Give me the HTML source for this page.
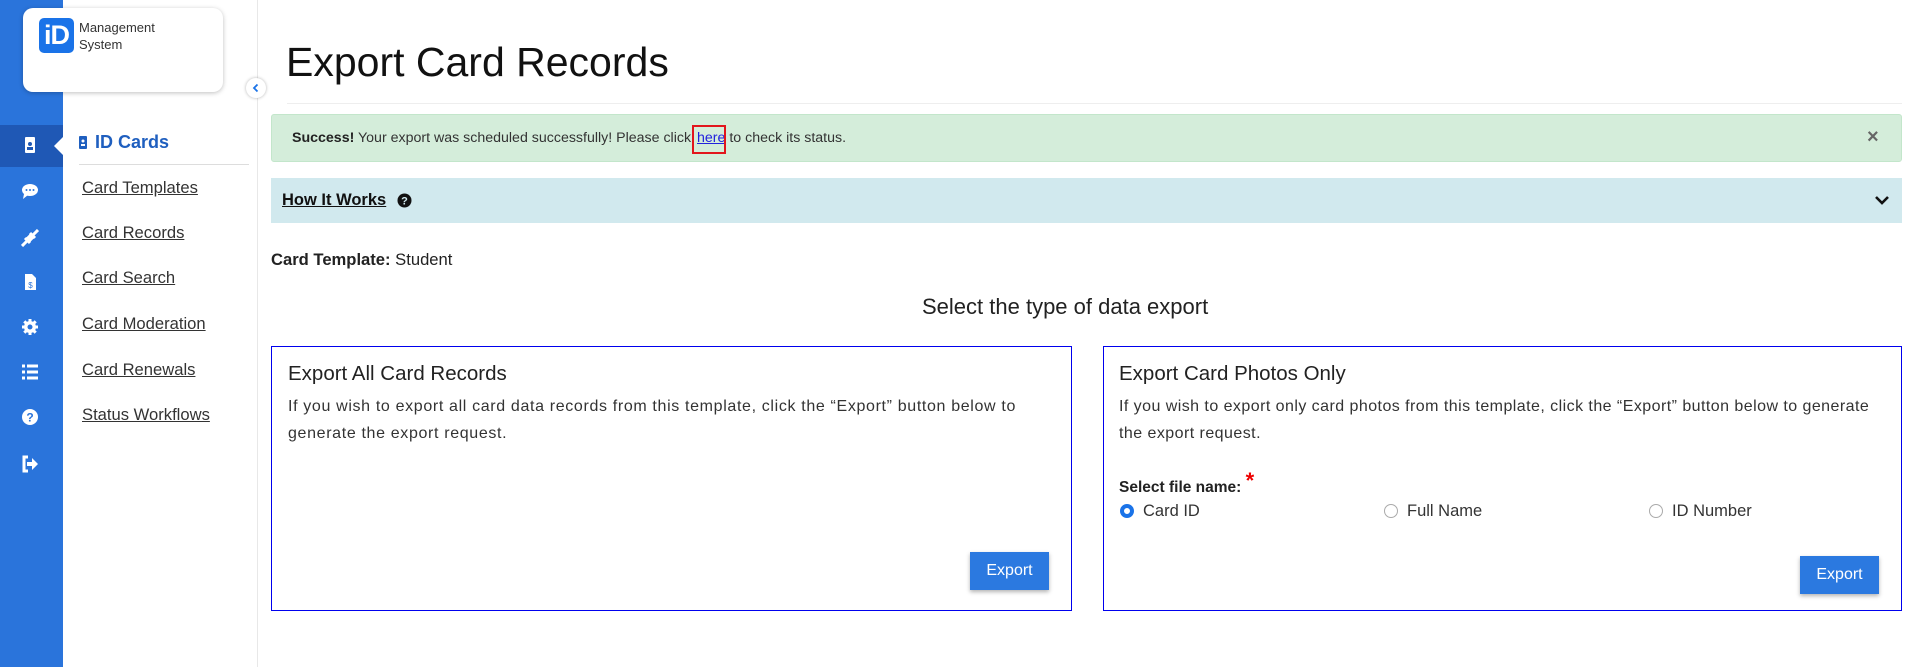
<!DOCTYPE html>
<html><head><meta charset="utf-8"><style>
*{margin:0;padding:0;box-sizing:border-box}
body{width:1914px;height:667px;overflow:hidden;background:#fff;font-family:"Liberation Sans",sans-serif;color:#212529;position:relative}
.abs{position:absolute}
.side{left:0;top:0;width:63px;height:667px;background:#2a74db}
.act{left:0;top:125px;width:63px;height:42px;background:#1f58b5}
.tri{left:54px;top:137px;width:0;height:0;border-top:9px solid transparent;border-bottom:9px solid transparent;border-right:9px solid #fff}
.ico{left:21px;width:18px;height:18px}
.logo{left:23px;top:8px;width:200px;height:84px;background:#fff;border-radius:10px;box-shadow:0 1px 5px rgba(0,0,0,.25)}
.vline{left:257px;top:0;width:1px;height:667px;background:#e8e8e8}
.nav{left:82px;font-size:16.6px;color:#333;text-decoration:underline;line-height:20px}
.card{border:1px solid #0000ee;background:#fff}
.btn{background:#2b79e0;color:#fff;font-size:16px;text-align:center;line-height:38px;width:79px;height:38px;box-shadow:0 2px 4px rgba(0,0,0,.3)}
.h5{font-size:20.5px;color:#222}
.p{font-size:16px;line-height:27px;color:#333;white-space:nowrap;letter-spacing:0.65px}
.radio{width:14px;height:14px;border-radius:50%;border:1px solid #aaa}
</style></head><body>
<div class="abs side"></div>
<div class="abs act"></div>
<div class="abs tri"></div>
<svg class="abs ico" style="top:136px" viewBox="0 0 18 18"><rect x="4" y="1" width="10" height="16" rx="1" fill="#fff"/><circle cx="9" cy="8" r="2" fill="#1f58b5"/><rect x="6" y="11" width="6" height="3" fill="#1f58b5"/></svg>
<svg class="abs ico" style="top:182px" viewBox="0 0 18 18"><ellipse cx="9" cy="8" rx="8" ry="6" fill="#fff"/><path d="M3 12 L2 17 L7 13Z" fill="#fff"/><circle cx="5.5" cy="8" r="1" fill="#2a74db"/><circle cx="9" cy="8" r="1" fill="#2a74db"/><circle cx="12.5" cy="8" r="1" fill="#2a74db"/></svg>
<svg class="abs ico" style="top:229px" viewBox="0 0 18 18"><path d="M1 17 L6 12 M12 6 L17 1 M4 9 L9 14 M9 4 L14 9" stroke="#fff" stroke-width="3"/><rect x="6" y="6" width="6" height="6" transform="rotate(45 9 9)" fill="#fff"/></svg>
<svg class="abs ico" style="top:273px" viewBox="0 0 18 18"><path d="M4 1 H11 L15 5 V17 H4Z" fill="#fff"/><text x="9.5" y="15" font-size="8" fill="#2a74db" text-anchor="middle" font-family="Liberation Sans">$</text></svg>
<svg class="abs ico" style="top:318px" viewBox="0 0 18 18"><circle cx="9" cy="9" r="6" fill="#fff"/><path d="M9 1V17M1 9H17M3.3 3.3L14.7 14.7M14.7 3.3L3.3 14.7" stroke="#fff" stroke-width="3"/><circle cx="9" cy="9" r="2.5" fill="#2a74db"/></svg>
<svg class="abs ico" style="top:363px" viewBox="0 0 18 18"><path d="M1 3H4M6 3H17M1 9H4M6 9H17M1 15H4M6 15H17" stroke="#fff" stroke-width="3"/></svg>
<svg class="abs ico" style="top:408px" viewBox="0 0 18 18"><circle cx="9" cy="9" r="8" fill="#fff"/><text x="9" y="13.5" font-size="12" font-weight="bold" fill="#2a74db" text-anchor="middle" font-family="Liberation Sans">?</text></svg>
<svg class="abs ico" style="top:455px" viewBox="0 0 18 18"><path d="M7 2H3V16H7" stroke="#fff" stroke-width="3" fill="none"/><path d="M6 7H11V3L17 9L11 15V11H6Z" fill="#fff"/></svg>

<div class="abs logo"></div>
<div class="abs" style="left:39px;top:18px;width:35px;height:35px;background:#1a73e8;border-radius:5px;color:#fff;font-weight:bold;font-size:27px;line-height:35px;text-align:center;letter-spacing:-1px">iD</div>
<div class="abs" style="left:79px;top:19px;font-size:13px;line-height:17px;color:#333">Management<br>System</div>
<div class="abs vline"></div>
<div class="abs" style="left:246px;top:78px;width:20px;height:20px;border-radius:50%;background:#fff;box-shadow:0 0 3px rgba(0,0,0,.3)"></div>
<svg class="abs" style="left:251px;top:83px" width="10" height="10" viewBox="0 0 10 10"><path d="M6.5 1.5L3 5L6.5 8.5" stroke="#1a73e8" stroke-width="1.8" fill="none"/></svg>

<svg class="abs" style="left:78px;top:136px" width="10" height="13" viewBox="0 0 10 13"><rect x="1" y="0" width="8" height="13" rx="1" fill="#1f5fbf"/><circle cx="5" cy="5" r="1.5" fill="#fff"/><rect x="3" y="8" width="4" height="2" fill="#fff"/></svg>
<div class="abs" style="left:95px;top:132px;font-size:18px;font-weight:bold;color:#1f5fbf">ID Cards</div>
<div class="abs" style="left:79px;top:164px;width:170px;height:1px;background:#ddd"></div>
<div class="abs nav" style="top:178px">Card Templates</div>
<div class="abs nav" style="top:223px">Card Records</div>
<div class="abs nav" style="top:268px">Card Search</div>
<div class="abs nav" style="top:314px">Card Moderation</div>
<div class="abs nav" style="top:360px">Card Renewals</div>
<div class="abs nav" style="top:405px">Status Workflows</div>

<div class="abs" style="left:286px;top:37px;font-size:41px;color:#111;line-height:50px">Export Card Records</div>
<div class="abs" style="left:287px;top:103px;width:1615px;height:1px;background:#eee"></div>

<div class="abs" style="left:271px;top:114px;width:1631px;height:48px;background:#d4edda;border:1px solid #c3e6cb;border-radius:3px"></div>
<div class="abs" style="left:292px;top:129px;font-size:14.2px;color:#333;line-height:18px;white-space:nowrap"><b style="color:#222">Success!</b> Your export was scheduled successfully! Please click <span style="text-decoration:underline;color:#2222dd;margin-left:2px">here</span> to check its status.</div>
<div class="abs" style="left:692px;top:125px;width:34px;height:29px;border:2px solid #e2161c"></div>
<div class="abs" style="left:1867px;top:126px;font-size:20px;color:#666;font-weight:bold">×</div>

<div class="abs" style="left:271px;top:178px;width:1631px;height:45px;background:#d1e9ee"></div>
<div class="abs" style="left:282px;top:191px;font-size:16.5px;font-weight:bold;text-decoration:underline;color:#111">How It Works</div>
<svg class="abs" style="left:397px;top:193px" width="15" height="15" viewBox="0 0 15 15"><circle cx="7.5" cy="7.5" r="7" fill="#111"/><text x="7.5" y="11.5" font-size="11" font-weight="bold" fill="#d1e9ee" text-anchor="middle" font-family="Liberation Sans">?</text></svg>
<svg class="abs" style="left:1874px;top:194px" width="16" height="12" viewBox="0 0 16 12"><path d="M2 3L8 9L14 3" stroke="#111" stroke-width="2.6" fill="none"/></svg>

<div class="abs" style="left:271px;top:250px;font-size:16.6px;color:#222"><b>Card Template:</b> Student</div>
<div class="abs" style="left:922px;top:294px;font-size:22px;color:#222">Select the type of data export</div>

<div class="abs card" style="left:271px;top:346px;width:801px;height:265px"></div>
<div class="abs h5" style="left:288px;top:362px">Export All Card Records</div>
<div class="abs p" style="left:288px;top:393px">If you wish to export all card data records from this template, click the “Export” button below to<br>generate the export request.</div>
<div class="abs btn" style="left:970px;top:552px">Export</div>

<div class="abs card" style="left:1103px;top:346px;width:799px;height:265px"></div>
<div class="abs h5" style="left:1119px;top:362px">Export Card Photos Only</div>
<div class="abs p" style="left:1119px;top:393px;letter-spacing:0.45px">If you wish to export only card photos from this template, click the “Export” button below to generate<br>the export request.</div>
<div class="abs" style="left:1119px;top:472px;font-size:15.5px;font-weight:bold;color:#222">Select file name: <span style="color:#e00;font-size:22px;position:relative;top:-4px">*</span></div>
<div class="abs radio" style="left:1120px;top:504px;border:4px solid #1a73e8"></div>
<div class="abs" style="left:1143px;top:502px;font-size:16.5px;color:#333">Card ID</div>
<div class="abs radio" style="left:1384px;top:504px"></div>
<div class="abs" style="left:1407px;top:502px;font-size:16.5px;color:#333">Full Name</div>
<div class="abs radio" style="left:1649px;top:504px"></div>
<div class="abs" style="left:1672px;top:502px;font-size:16.5px;color:#333">ID Number</div>
<div class="abs btn" style="left:1800px;top:556px">Export</div>
</body></html>
